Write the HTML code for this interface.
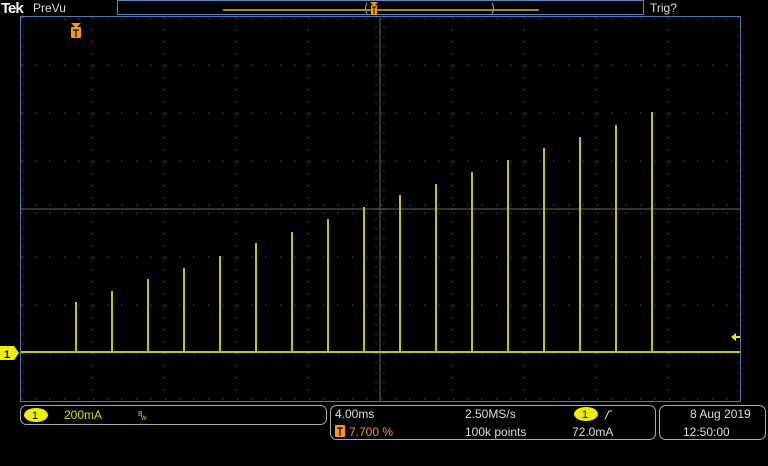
<!DOCTYPE html>
<html><head><style>
body{margin:0;background:#000;width:768px;height:461px;overflow:hidden;font-family:"Liberation Sans",sans-serif}
</style></head><body>
<svg width="768" height="461" viewBox="0 0 768 461" xmlns="http://www.w3.org/2000/svg" font-family="Liberation Sans, sans-serif">
<rect width="768" height="461" fill="#000"/>
<text x="1" y="13" font-size="15" font-weight="bold" fill="#fff" letter-spacing="-1">Tek</text>
<text x="33" y="12" font-size="12" fill="#ddd">PreVu</text>
<rect x="117.5" y="0.5" width="526" height="14" fill="none" stroke="#5a86b8"/>
<line x1="223" y1="10" x2="539" y2="10" stroke="#c8c020" stroke-width="1.5"/>
<path d="M367 3 Q364 8 367 14 M492 3 Q495 8 492 14" stroke="#998" fill="none" stroke-width="1.2"/>
<path d="M370 2h8l-4 4z" fill="#f90"/><rect x="371" y="5" width="6" height="10" rx="1" fill="#f90"/><path d="M372 7h4M374 7v7" stroke="#000" stroke-width="1"/>
<text x="650" y="12" font-size="12" fill="#ddd">Trig?</text>
<rect x="20.5" y="16.5" width="720" height="385" fill="none" stroke="#4a7ab0"/>
<g stroke="#777" stroke-width="1" stroke-dasharray="1 11">
<line x1="92" y1="17" x2="92" y2="401"/><line x1="164" y1="17" x2="164" y2="401"/><line x1="236" y1="17" x2="236" y2="401"/><line x1="308" y1="17" x2="308" y2="401"/>
<line x1="452" y1="17" x2="452" y2="401"/><line x1="524" y1="17" x2="524" y2="401"/><line x1="596" y1="17" x2="596" y2="401"/><line x1="668" y1="17" x2="668" y2="401"/>
<line x1="21" y1="65" x2="740" y2="65" stroke-dasharray="1 13.4"/><line x1="21" y1="113" x2="740" y2="113" stroke-dasharray="1 13.4"/><line x1="21" y1="161" x2="740" y2="161" stroke-dasharray="1 13.4"/>
<line x1="21" y1="257" x2="740" y2="257" stroke-dasharray="1 13.4"/><line x1="21" y1="305" x2="740" y2="305" stroke-dasharray="1 13.4"/><line x1="21" y1="353" x2="740" y2="353" stroke-dasharray="1 13.4"/>
</g>
<line x1="380" y1="17" x2="380" y2="401" stroke="#6b6550"/>
<line x1="21" y1="209" x2="740" y2="209" stroke="#6b6550"/>
<g stroke="#777" stroke-width="1">
<line x1="21" y1="205" x2="740" y2="205" stroke-dasharray="1 13.4"/>
<line x1="21" y1="213" x2="740" y2="213" stroke-dasharray="1 13.4"/>
<line x1="376" y1="17" x2="376" y2="401" stroke-dasharray="1 8.6"/>
<line x1="384" y1="17" x2="384" y2="401" stroke-dasharray="1 8.6"/>
<line x1="21" y1="19" x2="740" y2="19" stroke-dasharray="1 13.4"/>
<line x1="21" y1="399" x2="740" y2="399" stroke-dasharray="1 13.4"/>
<line x1="23" y1="17" x2="23" y2="401" stroke-dasharray="1 8.6"/>
<line x1="738" y1="17" x2="738" y2="401" stroke-dasharray="1 8.6"/>
</g>
<path d="M71 23h10l-5 5z" fill="#f90"/><rect x="71" y="27" width="10" height="11" rx="1" fill="#f90"/><path d="M73 30h6M76 30v7" stroke="#000" stroke-width="1.3"/>
<g stroke="#c8c01a" stroke-width="2">
<line x1="21" y1="352" x2="740" y2="352"/>
<line x1="76" y1="352" x2="76" y2="302"/><line x1="112" y1="352" x2="112" y2="291"/><line x1="148" y1="352" x2="148" y2="279"/><line x1="184" y1="352" x2="184" y2="268"/>
<line x1="220" y1="352" x2="220" y2="256"/><line x1="256" y1="352" x2="256" y2="243"/><line x1="292" y1="352" x2="292" y2="232"/><line x1="328" y1="352" x2="328" y2="219"/>
<line x1="364" y1="352" x2="364" y2="207"/><line x1="400" y1="352" x2="400" y2="195"/><line x1="436" y1="352" x2="436" y2="184"/><line x1="472" y1="352" x2="472" y2="172"/>
<line x1="508" y1="352" x2="508" y2="160"/><line x1="544" y1="352" x2="544" y2="148"/><line x1="580" y1="352" x2="580" y2="137"/><line x1="616" y1="352" x2="616" y2="125"/><line x1="652" y1="352" x2="652" y2="112"/>
</g>
<path d="M0 346h14l5 7-5 7H0z" fill="#ee0"/><text x="4" y="358" font-size="11" font-weight="bold" fill="#000">1</text>
<path d="M731 337l5-4v3h4v2h-4v3z" fill="#ee0"/>
<rect x="20.5" y="405.5" width="306" height="19" rx="6" fill="none" stroke="#aaa"/>
<ellipse cx="36" cy="415" rx="12" ry="7" fill="#ee0"/><text x="32" y="419" font-size="11" fill="#000">1</text>
<text x="64" y="419" font-size="12" fill="#dd0">200mA</text>
<text x="138" y="416" font-size="7" fill="#dd0">B</text><text x="141" y="420" font-size="6" fill="#dd0">W</text>
<rect x="330.5" y="405.5" width="325" height="34" rx="6" fill="none" stroke="#aaa"/>
<text x="335" y="418" font-size="12" fill="#ddd">4.00ms</text>
<text x="465" y="418" font-size="12" fill="#ddd">2.50MS/s</text>
<ellipse cx="586" cy="414" rx="12" ry="7" fill="#ee0"/><text x="582" y="418" font-size="11" fill="#000">1</text>
<path d="M605 419l4-8h3" stroke="#ddd" fill="none"/>
<rect x="335" y="425" width="10" height="12" rx="1" fill="#f90"/><path d="M337 428h6M340 428v8" stroke="#000" stroke-width="1.3"/>
<text x="349" y="436" font-size="12" fill="#f90">7.700 %</text>
<text x="465" y="436" font-size="12" fill="#ddd">100k points</text>
<text x="572" y="436" font-size="12" fill="#ddd">72.0mA</text>
<rect x="659.5" y="405.5" width="106" height="34" rx="6" fill="none" stroke="#aaa"/>
<text x="690" y="418" font-size="12" fill="#ddd">8 Aug 2019</text>
<text x="683" y="436" font-size="12" fill="#ddd">12:50:00</text>
</svg>
</body></html>
